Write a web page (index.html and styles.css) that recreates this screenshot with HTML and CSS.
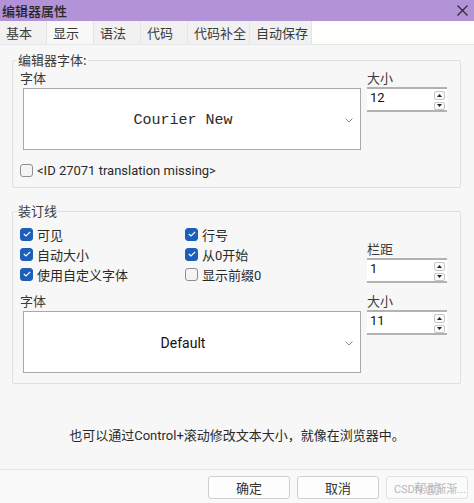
FILE: index.html
```html
<!DOCTYPE html>
<html lang="zh">
<head>
<meta charset="utf-8">
<title>编辑器属性</title>
<link rel="stylesheet" href="styles.css">
</head>
<body>
<div class="dialog">
  <div class="titlebar">
    <span class="title">编辑器属性</span>
    <svg class="close" width="11" height="11" viewBox="0 0 11 11"><path d="M0.5 0.5L10.5 10.5M10.5 0.5L0.5 10.5" stroke="#34283f" stroke-width="1.3" fill="none"/></svg>
  </div>
  <div class="tabs">
    <div class="tab">基本</div>
    <div class="tab active">显示</div>
    <div class="tab">语法</div>
    <div class="tab">代码</div>
    <div class="tab">代码补全</div>
    <div class="tab">自动保存</div>
    <div class="tab-fill"></div>
  </div>
  <div class="page">
    <fieldset class="group g1">
      <legend>编辑器字体:</legend>
      <div class="gbody">
        <div class="font-row">
          <div class="font-col">
            <div class="label">字体</div>
            <div class="combo"><span class="mono">Courier New</span>
              <svg class="chev" width="8" height="5" viewBox="0 0 8 5"><path d="M0.5 0.5L4 4L7.5 0.5" stroke="#8a8a8a" fill="none"/></svg>
            </div>
          </div>
          <div class="size-col">
            <div class="label">大小</div>
            <div class="spin"><span>12</span>
              <div class="spin-btns"><span class="sb"><svg width="5" height="3" viewBox="0 0 5 3"><path d="M0 3L2.5 0L5 3Z" fill="#222"/></svg></span><span class="sb"><svg width="5" height="3" viewBox="0 0 5 3"><path d="M0 0L2.5 3L5 0Z" fill="#222"/></svg></span></div>
            </div>
          </div>
        </div>
        <div class="check-row first"><span class="cb"></span><span>&lt;ID 27071 translation missing&gt;</span></div>
      </div>
    </fieldset>

    <fieldset class="group g2">
      <legend>装订线</legend>
      <div class="gbody">
        <div class="gutter-row">
          <div class="checks">
            <div class="check-row"><span class="cb on"><svg width="8" height="6" viewBox="0 0 8 6"><path d="M0.8 3L3 5L7.2 0.8" stroke="#fff" stroke-width="1.2" fill="none"/></svg></span><span>可见</span></div>
            <div class="check-row"><span class="cb on"><svg width="8" height="6" viewBox="0 0 8 6"><path d="M0.8 3L3 5L7.2 0.8" stroke="#fff" stroke-width="1.2" fill="none"/></svg></span><span>行号</span></div>
            <div class="check-row"><span class="cb on"><svg width="8" height="6" viewBox="0 0 8 6"><path d="M0.8 3L3 5L7.2 0.8" stroke="#fff" stroke-width="1.2" fill="none"/></svg></span><span>自动大小</span></div>
            <div class="check-row"><span class="cb on"><svg width="8" height="6" viewBox="0 0 8 6"><path d="M0.8 3L3 5L7.2 0.8" stroke="#fff" stroke-width="1.2" fill="none"/></svg></span><span>从0开始</span></div>
            <div class="check-row"><span class="cb on"><svg width="8" height="6" viewBox="0 0 8 6"><path d="M0.8 3L3 5L7.2 0.8" stroke="#fff" stroke-width="1.2" fill="none"/></svg></span><span>使用自定义字体</span></div>
            <div class="check-row"><span class="cb"></span><span>显示前缀0</span></div>
          </div>
          <div class="size-col gap-col">
            <div class="label">栏距</div>
            <div class="spin"><span>1</span>
              <div class="spin-btns"><span class="sb"><svg width="5" height="3" viewBox="0 0 5 3"><path d="M0 3L2.5 0L5 3Z" fill="#222"/></svg></span><span class="sb"><svg width="5" height="3" viewBox="0 0 5 3"><path d="M0 0L2.5 3L5 0Z" fill="#222"/></svg></span></div>
            </div>
          </div>
        </div>
        <div class="font-row second">
          <div class="font-col">
            <div class="label">字体</div>
            <div class="combo"><span class="sans">Default</span>
              <svg class="chev" width="8" height="5" viewBox="0 0 8 5"><path d="M0.5 0.5L4 4L7.5 0.5" stroke="#8a8a8a" fill="none"/></svg>
            </div>
          </div>
          <div class="size-col">
            <div class="label">大小</div>
            <div class="spin"><span>11</span>
              <div class="spin-btns"><span class="sb"><svg width="5" height="3" viewBox="0 0 5 3"><path d="M0 3L2.5 0L5 3Z" fill="#222"/></svg></span><span class="sb"><svg width="5" height="3" viewBox="0 0 5 3"><path d="M0 0L2.5 3L5 0Z" fill="#222"/></svg></span></div>
            </div>
          </div>
        </div>
      </div>
    </fieldset>

    <p class="hint">也可以通过Control+滚动修改文本大小，就像在浏览器中。</p>
  </div>
  <div class="footer">
    <button class="btn">确定</button>
    <button class="btn">取消</button>
    <button class="btn" disabled>帮助</button>
    <span class="watermark">CSDN @渐渐...</span>
  </div>
</div>
</body>
</html>
```

FILE: styles.css
```css
* { box-sizing: border-box; }
html, body { margin: 0; padding: 0; }
body {
  width: 474px;
  height: 503px;
  background: #f7f7f7;
  font-family: Roboto, "Noto Sans CJK SC", sans-serif;
  font-size: 13px;
  color: #2e2e2e;
  overflow: hidden;
}
.dialog {
  width: 474px;
  height: 503px;
  display: flex;
  flex-direction: column;
  position: relative;
}
.titlebar {
  height: 21px;
  background: #b393d7;
  display: flex;
  align-items: center;
  justify-content: space-between;
  padding: 0 6px 0 2px;
}
.title {
  font-family: "Noto Sans CJK SC", sans-serif;
  font-size: 13px;
  font-weight: 500;
  color: #262626;
  line-height: 16px;
}
.close { display: block; }
.tabs {
  height: 24px;
  display: flex;
  border-bottom: 1px solid #e6e6e6;
  background: #fdfdfb;
}
.tab {
  min-width: 47px;
  padding: 0 3px 0 6px;
  background: #f1f1f1;
  border-right: 1px solid #e4e4e4;
  font-family: "Noto Sans CJK SC", sans-serif;
  font-size: 13px;
  color: #3a3a3a;
  line-height: 23px;
  white-space: nowrap;
}
.tab.active { background: #f8f8f8; }
.tab-fill { flex: 1; background: #fefefc; }
.page {
  flex: 1;
  display: flex;
  flex-direction: column;
}
.group {
  margin: 0 13px 0 12px;
  padding: 0;
  border: 1px solid #e0e0e0;
  border-radius: 2px;
  min-width: 0;
}
.g1 { margin-top: 7px; }
.g2 { margin-top: 15px; }
.group legend {
  margin-left: 4px;
  padding: 0 1px;
  font-family: "Noto Sans CJK SC", sans-serif;
  font-size: 13px;
  line-height: 16px;
  color: #3a3a3a;
}
.gbody { padding: 2px 13px 10px 7px; }
.g1 .gbody { padding-bottom: 7px; }
.g2 .gbody { padding-top: 5px; }
.label {
  font-family: "Noto Sans CJK SC", sans-serif;
  font-size: 13px;
  line-height: 16px;
  color: #3a3a3a;
}
.font-row { display: flex; }
.font-row.second { margin-top: 9px; }
.font-col { width: 341px; }
.font-col .label { margin-bottom: 2px; }
.size-col { width: 80px; margin-left: 6px; }
.size-col .label { margin-bottom: 1px; }
.combo {
  margin-left: 3px;
  width: 338px;
  height: 62px;
  background: #fff;
  border: 1px solid #a9a9a9;
  display: flex;
  align-items: center;
  justify-content: center;
  position: relative;
}
.chev { position: absolute; right: 7px; top: 29px; }
.mono {
  font-family: "Liberation Mono", monospace;
  font-size: 15px;
  color: #2a2a2a;
  margin-right: 18px;
  margin-top: 2px;
}
.sans {
  font-family: Roboto, sans-serif;
  font-size: 14px;
  color: #111;
  margin-right: 18px;
  margin-top: 2px;
}
.spin {
  height: 25px;
  background: #fff;
  border-top: 2px solid #b2b2b2;
  border-bottom: 2px solid #b2b2b2;
  display: flex;
  justify-content: space-between;
  padding: 1px 2px 0 3px;
  font-size: 13px;
  color: #111;
  line-height: 16px;
}
.spin-btns {
  display: flex;
  flex-direction: column;
  gap: 2px;
  padding-top: 1px;
}
.sb {
  width: 11px;
  height: 9px;
  border: 1px solid #c6c6c6;
  border-radius: 2px;
  background: #fafafa;
  display: flex;
  align-items: center;
  justify-content: center;
}
.sb svg { display: block; }
.check-row {
  display: flex;
  align-items: center;
  gap: 4px;
  height: 20px;
  font-size: 13px;
  color: #2a2a2a;
}
.check-row.first { margin-top: 10px; }
.cb {
  width: 13px;
  height: 13px;
  border: 1px solid #8e8e8e;
  border-radius: 3px;
  background: #f4f4f4;
  display: flex;
  align-items: center;
  justify-content: center;
  flex-shrink: 0;
}
.cb.on {
  background: #1c5eb9;
  border-color: #1c5eb9;
}
.gutter-row {
  display: flex;
  align-items: flex-end;
}
.checks {
  width: 341px;
  display: grid;
  grid-template-columns: 165px 176px;
}
.gap-col { margin-bottom: 1px; }
.hint {
  margin: 43px 0 0;
  text-align: center;
  font-size: 13px;
  line-height: 18px;
  color: #2a2a2a;
}
.footer {
  height: 34px;
  border-top: 1px solid #e6e6e6;
  background: #f9f9f9;
  display: flex;
  justify-content: flex-end;
  gap: 7px;
  padding: 6px 6px 0 0;
  position: relative;
}
.btn {
  width: 82px;
  height: 23px;
  background: #fdfdfd;
  border: 1px solid #cfcfcf;
  border-radius: 3px;
  font-family: "Noto Sans CJK SC", sans-serif;
  font-size: 13px;
  color: #333;
  padding: 0;
  line-height: 20px;
}
.btn:disabled {
  color: #c2c2c2;
  border-color: #e2e2e2;
  background: #fbfbfb;
}
.watermark {
  position: absolute;
  right: 8px;
  top: 13px;
  font-family: Roboto, "Noto Sans CJK SC", sans-serif;
  font-size: 11px;
  color: #b8b8b8;
  line-height: 14px;
}
```
